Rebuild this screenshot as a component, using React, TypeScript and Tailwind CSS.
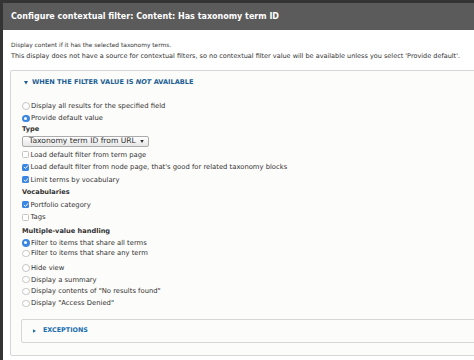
import React from "react";

function Radio({ checked }: { checked?: boolean }) {
  return checked ? (
    <span className="w-[7.5px] h-[7.5px] rounded-full bg-[#3a87e3] flex items-center justify-center shrink-0">
      <span className="w-[2.6px] h-[2.6px] rounded-full bg-white" />
    </span>
  ) : (
    <span className="w-[7.5px] h-[7.5px] rounded-full bg-white border border-[#c4c4c4] shrink-0" />
  );
}

function Check({ checked }: { checked?: boolean }) {
  return checked ? (
    <span className="w-[7px] h-[7px] rounded-[1.5px] bg-[#3a87e3] flex items-center justify-center shrink-0">
      <svg viewBox="0 0 10 10" className="w-[6px] h-[6px]">
        <path d="M2 5.2 L4.2 7.4 L8 2.8" fill="none" stroke="white" strokeWidth="1.6" strokeLinecap="round" strokeLinejoin="round" />
      </svg>
    </span>
  ) : (
    <span className="w-[7px] h-[7px] rounded-[1.5px] bg-white border border-[#c4c4c4] shrink-0" />
  );
}

function Option({ label, h, kind, checked }: { label: string; h: string; kind: "radio" | "check"; checked?: boolean }) {
  return (
    <div className={`flex items-center gap-[1.5px] whitespace-nowrap ${h}`}>
      {kind === "radio" ? <Radio checked={checked} /> : <Check checked={checked} />}
      <span>{label}</span>
    </div>
  );
}

export default function App() {
  return (
    <div className="w-[474px] h-[360px] overflow-hidden bg-[#343434] pl-[3px] pt-[3px] font-['DejaVu_Sans',Verdana,sans-serif] text-[#333]">
      <div className="w-[520px] h-[400px] flex flex-col bg-white">
        <div className="h-[27px] shrink-0 bg-[#5b5b5b] flex items-center pl-[8px] text-white font-bold text-[8px] whitespace-nowrap">
          Configure contextual filter: Content: Has taxonomy term ID
        </div>

        <div className="pl-[7px] pt-[9.5px]">
          <p className="pl-[1px] h-[11px] leading-[11px] text-[5.9px] whitespace-nowrap">
            Display content if it has the selected taxonomy terms.
          </p>
          <p className="pl-[1px] h-[11px] leading-[11px] text-[6.5px] whitespace-nowrap">
            This display does not have a source for contextual filters, so no contextual filter value will be available unless you select 'Provide default'.
          </p>

          <div className="mt-[8px] border border-[#d6d6d6] rounded-[2px] bg-[#fcfcfa] pb-[12px]">
            <div className="h-[25px] flex items-center pl-[13px] gap-[4px] text-[#1d5f94] font-bold text-[6.6px] uppercase whitespace-nowrap">
              <svg viewBox="0 0 6 5" className="w-[4px] h-[3.5px]">
                <path d="M0 0 H6 L3 5 Z" fill="#1d5f94" />
              </svg>
              <span>
                When the filter value is <em>not</em> available
              </span>
            </div>

            <div className="pl-[11px] pt-[4px] text-[6.8px]">
              <Option kind="radio" h="h-[12.5px]" label="Display all results for the specified field" />
              <Option kind="radio" h="h-[12.5px]" checked label="Provide default value" />
              <div className="h-[10.5px] flex items-center font-bold text-[6.6px]">Type</div>
              <div className="mt-[0.5px] h-[11px] w-[127px] border border-[#ababab] rounded-[2px] bg-gradient-to-b from-white to-[#e6e6e6] flex items-center justify-between pl-[6px] pr-[4px] whitespace-nowrap text-[7.6px]">
                <span>Taxonomy term ID from URL</span>
                <svg viewBox="0 0 6 5" className="w-[4px] h-[3px]">
                  <path d="M0 0 H6 L3 5 Z" fill="#333" />
                </svg>
              </div>
              <div className="mt-[2px]">
                <Option kind="check" h="h-[12.5px]" label="Load default filter from term page" />
                <Option kind="check" h="h-[12.5px]" checked label="Load default filter from node page, that's good for related taxonomy blocks" />
                <Option kind="check" h="h-[12.5px]" checked label="Limit terms by vocabulary" />
              </div>
              <div className="mt-[0.5px] h-[12px] flex items-center font-bold text-[6.6px]">Vocabularies</div>
              <Option kind="check" h="h-[12.5px]" checked label="Portfolio category" />
              <Option kind="check" h="h-[12.5px]" label="Tags" />
              <div className="mt-[3.5px] h-[10.5px] flex items-center font-bold text-[6.6px]">Multiple-value handling</div>
              <Option kind="radio" h="h-[10.5px]" checked label="Filter to items that share all terms" />
              <Option kind="radio" h="h-[10.5px]" label="Filter to items that share any term" />
              <div className="mt-[3.5px]">
                <Option kind="radio" h="h-[11.8px]" label="Hide view" />
                <Option kind="radio" h="h-[11.8px]" label="Display a summary" />
                <Option kind="radio" h="h-[11.8px]" label={'Display contents of "No results found"'} />
                <Option kind="radio" h="h-[11.8px]" label={'Display "Access Denied"'} />
              </div>

              <div className="-ml-[1px] mt-[9.5px] h-[24px] border border-[#d6d6d6] rounded-[2px] bg-[#fcfcfa] flex items-center pl-[11px] gap-[7px] text-[#1a6db0] font-bold text-[6.4px] uppercase">
                <svg viewBox="0 0 5 6" className="w-[3px] h-[4px]">
                  <path d="M0 0 V6 L5 3 Z" fill="#1a6db0" />
                </svg>
                <span>Exceptions</span>
              </div>
            </div>
          </div>
        </div>
      </div>
    </div>
  );
}
